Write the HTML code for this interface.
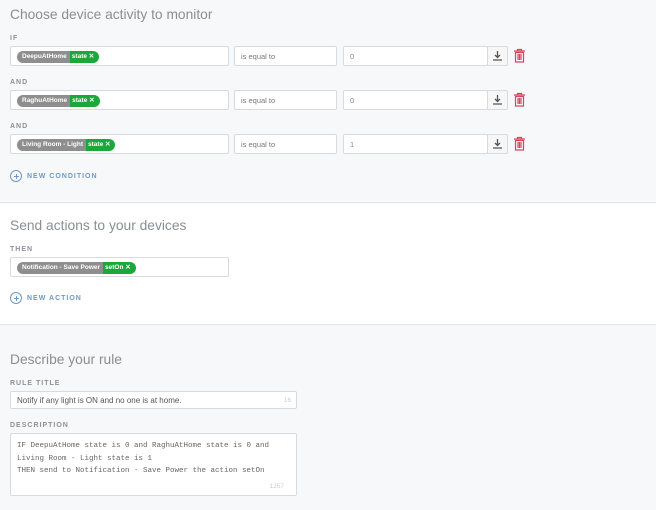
<!DOCTYPE html>
<html><head><style>
*{box-sizing:border-box;margin:0;padding:0}
body{width:656px;height:510px;overflow:hidden;font-family:"Liberation Sans",sans-serif;background:#f7f8fa;position:relative}
.sec{position:absolute;left:0;width:656px}
.a{position:absolute}
h2{position:absolute;left:10px;font-weight:normal;font-size:13.8px;color:#8a8e93}
.lbl{position:absolute;left:10px;font-size:7px;font-weight:bold;letter-spacing:1px;color:#8d9196}
.in{position:absolute;background:#fff;border:1px solid #d8dbde;border-radius:2px;height:20px}
.op{font-size:7.5px;color:#777;padding:5px 0 0 6px}
.val{font-size:7.5px;color:#888;padding:5px 0 0 6px}
.pill{position:absolute;left:6px;top:3.5px;height:12px;border-radius:6px;overflow:hidden;display:flex;font-size:6.5px;font-weight:bold;color:#fff;line-height:12px}
.pill .g{background:#8e8e8e;padding:0 3px 0 5px}
.pill .gr{background:#1ba83a;padding:0 5px 0 2px}
.btn{position:absolute;right:-1px;top:-1px;width:21px;height:20px;border:1px solid #d8dbde;border-radius:0 2px 2px 0;background:#f7f7f7}
.new{position:absolute;left:10px;font-size:7px;font-weight:bold;letter-spacing:1px;color:#6d9ac9;display:flex;align-items:center}
.new span.c{width:12px;height:12px;border:1px solid #6d9ac9;border-radius:50%;margin-right:5px;position:relative}
.new span.c:before{content:"";position:absolute;left:2.5px;top:5px;width:5px;height:1px;background:#6d9ac9}
.new span.c:after{content:"";position:absolute;left:5px;top:2.5px;width:1px;height:5px;background:#6d9ac9}
</style></head><body>
<div class="sec" style="top:0;height:203px;background:#f7f8fa;border-bottom:1px solid #e3e5e8"></div>
<div class="sec" style="top:204px;height:121px;background:#fff;border-bottom:1px solid #e3e5e8"></div>

<h2 style="top:7px">Choose device activity to monitor</h2>
<div class="lbl" style="top:35px">IF</div>
<div class="lbl" style="top:79px">AND</div>
<div class="lbl" style="top:123px">AND</div>

<div class="in" style="left:10px;top:46px;width:219px"><div class="pill"><span class="g">DeepuAtHome</span><span class="gr">state ✕</span></div></div>
<div class="in" style="left:10px;top:90px;width:219px"><div class="pill"><span class="g">RaghuAtHome</span><span class="gr">state ✕</span></div></div>
<div class="in" style="left:10px;top:134px;width:219px"><div class="pill"><span class="g">Living Room - Light</span><span class="gr">state ✕</span></div></div>

<div class="in op" style="left:234px;top:46px;width:103px">is equal to</div>
<div class="in op" style="left:234px;top:90px;width:103px">is equal to</div>
<div class="in op" style="left:234px;top:134px;width:103px">is equal to</div>

<div class="in val" style="left:343px;top:46px;width:165px">0<div class="btn"><svg width="19" height="18"><path d="M9.5 4v6M7 8l2.5 2.5L12 8M5 13h9" stroke="#555" stroke-width="1.3" fill="none"/></svg></div></div>
<div class="in val" style="left:343px;top:90px;width:165px">0<div class="btn"><svg width="19" height="18"><path d="M9.5 4v6M7 8l2.5 2.5L12 8M5 13h9" stroke="#555" stroke-width="1.3" fill="none"/></svg></div></div>
<div class="in val" style="left:343px;top:134px;width:165px">1<div class="btn"><svg width="19" height="18"><path d="M9.5 4v6M7 8l2.5 2.5L12 8M5 13h9" stroke="#555" stroke-width="1.3" fill="none"/></svg></div></div>

<svg class="a" style="left:513px;top:48px" width="13" height="15"><path d="M1 3h11M4.5 3V1.5h4V3M2.5 4.5h8V14h-8zM5 6v6M6.5 6v6M8 6v6" stroke="#d9465a" stroke-width="1.2" fill="none"/></svg>
<svg class="a" style="left:513px;top:92px" width="13" height="15"><path d="M1 3h11M4.5 3V1.5h4V3M2.5 4.5h8V14h-8zM5 6v6M6.5 6v6M8 6v6" stroke="#d9465a" stroke-width="1.2" fill="none"/></svg>
<svg class="a" style="left:513px;top:136px" width="13" height="15"><path d="M1 3h11M4.5 3V1.5h4V3M2.5 4.5h8V14h-8zM5 6v6M6.5 6v6M8 6v6" stroke="#d9465a" stroke-width="1.2" fill="none"/></svg>

<div class="new" style="top:170px"><span class="c"></span>NEW CONDITION</div>

<h2 style="top:218px">Send actions to your devices</h2>
<div class="lbl" style="top:246px">THEN</div>
<div class="in" style="left:10px;top:257px;width:219px"><div class="pill"><span class="g">Notification - Save Power</span><span class="gr">setOn ✕</span></div></div>
<div class="new" style="top:292px"><span class="c"></span>NEW ACTION</div>

<h2 style="top:352px">Describe your rule</h2>
<div class="lbl" style="top:380px">RULE TITLE</div>
<div class="in" style="left:10px;top:391px;width:287px;height:18px;font-size:8px;color:#555;padding:4px 0 0 6px">Notify if any light is ON and no one is at home.<span style="position:absolute;right:5px;top:5px;font-size:6.5px;color:#ccc">16</span></div>
<div class="lbl" style="top:422px">DESCRIPTION</div>
<div class="in" style="left:10px;top:433px;width:287px;height:63px;font-family:'Liberation Mono',monospace;font-size:7.5px;color:#666;line-height:12.7px;padding:6px 0 0 6px">IF DeepuAtHome state is 0 and RaghuAtHome state is 0 and<br>Living Room - Light state is 1<br>THEN send to Notification - Save Power the action setOn<span style="position:absolute;right:12px;bottom:4px;font-family:'Liberation Sans';font-size:6.5px;color:#ccc;line-height:8px">1257</span></div>
</body></html>
